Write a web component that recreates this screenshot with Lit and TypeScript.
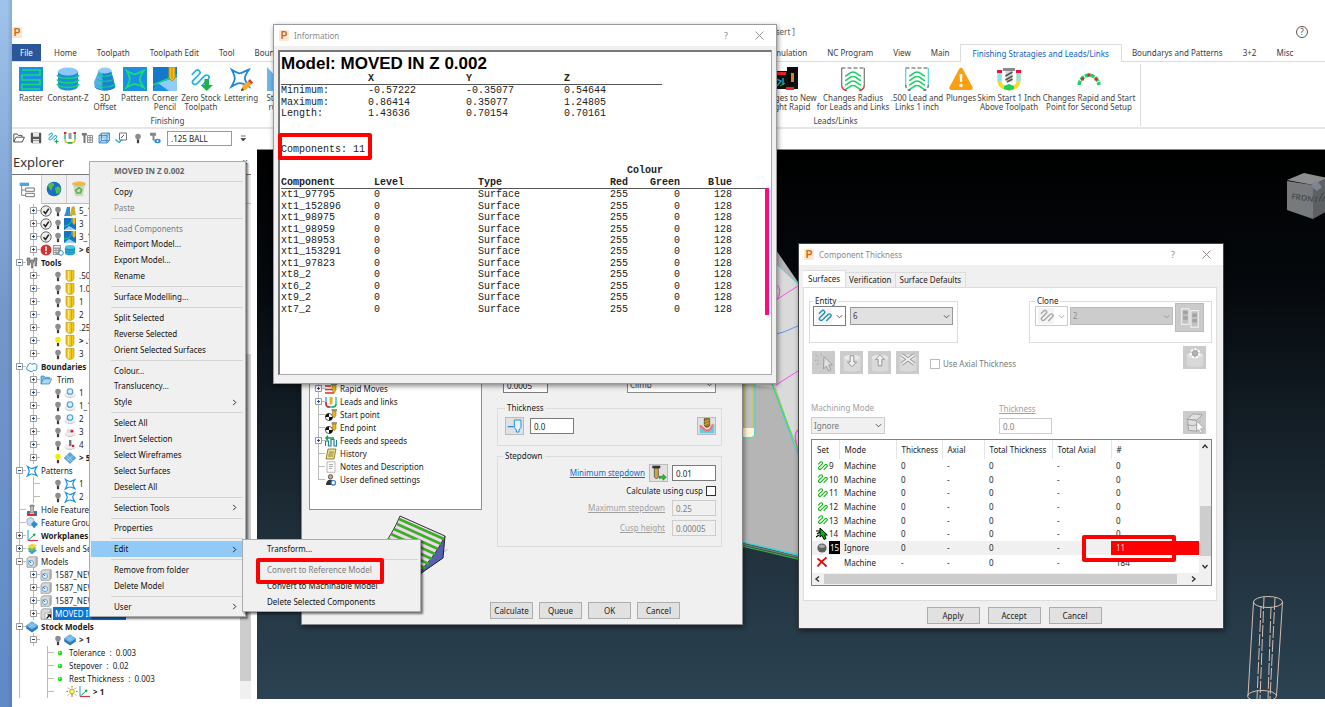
import { LitElement, html, svg, css, nothing } from "lit";
import { customElement } from "lit/decorators.js";
import { classMap } from "lit/directives/class-map.js";

const bulb = (c: string) => svg`<circle cx="6" cy="4.5" r="2.8" fill=${c}/><path d="M4.6 6h2.8v2H4.6z" fill=${c}/><path d="M4.9 8h2.2v3.2H4.9z" fill="#4a3838"/>`;
const cubeGlyph = svg`<path d="M1 2.5 3 .8h8.2v8.6L9.4 11.3H1z" fill="#d9d9d9" stroke="#8a8a8a" stroke-width=".7"/><path d="M9.4 2.7v8.6l1.8-1.9V.8z" fill="#a9a9a9"/>`;
const stamp = svg`<ellipse cx="6" cy="8" rx="5.4" ry="3" fill="#c9c9c9"/><ellipse cx="6" cy="7.2" rx="5.2" ry="2.6" fill="#eeeeee"/>`;
const star = "M1.5 1.5C4 3 5 3.5 6 3.5S8.5 2.5 11 1.5C9.5 4 8.8 5 8.8 6.2S9.5 8.5 11 10.8C8.5 9.5 7.5 9 6 9S3.5 9.8 1.3 11C2.7 8.5 3.2 7.5 3.2 6.2S2.5 3.5 1.5 1.5Z";
const serpent = "M-3.9 1.5V-1.5a1.3 1.3 0 0 1 2.6 0V3a1.3 1.3 0 0 0 2.6 0V-3a1.3 1.3 0 0 1 2.6 0V1.5";
const snake = (c: string) => svg`<path d=${serpent} transform="translate(6 6) rotate(45)" fill="none" stroke=${c} stroke-width="1.1"/>`;

/* Glyphs for the small tree, toolbar and list icons, on a 12 unit grid. */
const SMALL: Record<string, unknown> = {
  check: svg`<circle cx="6" cy="6" r="5.2" fill="#eee" stroke="#555" stroke-width=".9"/><path d="m3.5 6.2 2 2.3L8.8 3.6" fill="none" stroke="#222" stroke-width="1.6"/>`,
  bulb: bulb("#8d8d8d"),
  bulbOn: bulb("#f2e90e"),
  alert: svg`<circle cx="6" cy="6" r="5.5" fill="#d8302f"/><path d="M6 2.5v4.5" stroke="#fff" stroke-width="1.6"/><circle cx="6" cy="9" r="1" fill="#fff"/>`,
  calc: svg`<path d="M1 1h8v10H1z" fill="#9b9b9b"/><path d="M2 2h6v1.6H2zM2 5h1.5v1H2zM4.5 5H6v1H4.5zM2 7h1.5v1H2zM4.5 7H6v1H4.5zM2 9h1.5v1H2z" fill="#eee"/><circle cx="9" cy="9" r="2.3" fill="#fff" stroke="#2a8bd8"/>`,
  steep: svg`<path d="M0 11C2 8 2 4 3 2h3v9z" fill="#2f8fd6"/><path d="m6 11 2-9 1.5.5-1.5 8.5zM9 10l1-9 1.5 9z" fill="#e3b320" stroke="#9a7a10" stroke-width=".4"/>`,
  corner: svg`<path d="M0 0h12v12H0z" fill="#1673c4"/><path d="m0 12 5-4 7 4z" fill="#9ed3f7"/><path d="M0 8c5-.5 8-3 8-8" stroke="#14dc78" fill="none"/><path d="M8.5 0h3v5L10 7 8.5 5z" fill="#e8b818"/>`,
  disc: svg`<ellipse cx="6" cy="3" rx="5" ry="2" fill="#4fc3e6"/><path d="M1 3v6c0 3 10 3 10 0V3c0 2.5-10 2.5-10 0" fill="#1e8fd1"/><path d="M1 5.5c0 2.500 10 2.500 10 0M1 8c0 2.500 10 2.500 10 0" fill="none" stroke="#18cf86"/>`,
  tools: svg`<path d="M1 1h3v3H3.5v4h-2V4H1zM4.5 3h3v3H7v5H5.5V6h-1zM8 1h3v3h-.5v5H9V4H8z" fill="#999" stroke="#555" stroke-width=".6"/>`,
  tool: svg`<path d="M2 .5h8V8c0 4.500-8 4.500-8 0z" fill="#f3c716" stroke="#b08d10" stroke-width=".6"/><path d="M4.600 1v9.500" stroke="#fbe88a" stroke-width="1.3"/><path d="M7.500 1v9.800" stroke="#cf9f0a" stroke-width=".8"/>`,
  cloud: svg`<path d="M3 9.500C.2 9.500 0 6 2 5.300 1.500 2.500 5 1.500 6 3.400 8.500 1.500 12 3.500 10.800 6.300 11.500 9 9 10.500 7.800 9 6.500 11 4 11 3 9.500Z" fill="none" stroke="#1a8fdf"/>`,
  folder: svg`<path d="M1 10V2h3l1 1.300h4.500V5" fill="#7cc0ec" stroke="#2d7fb8" stroke-width=".7"/><path d="m1 10 2.200-5.200H11.600L9.300 10z" fill="#a7d8f6" stroke="#2d7fb8" stroke-width=".7"/>`,
  ring: svg`${stamp}<circle cx="6" cy="4.500" r="2.800" fill="#dceefa" stroke="#4a9bd6" stroke-width="1.1"/>`,
  dotRed: svg`${stamp}<path d="M3 3h5v4H3z" fill="#dcdcdc"/><circle cx="8" cy="5.200" r="1.400" fill="#e0104c"/>`,
  dotRod: svg`${stamp}<path d="M5 1h2.400v6H5z" fill="#777"/><circle cx="9" cy="7" r="1.300" fill="#e0104c"/>`,
  layers: svg`<path d="M6 .5 11.800 6 6 11.500.2 6z" fill="#5fa9dc" stroke="#2f79b5" stroke-width=".6"/><path d="M3 3.500 8.800 9M1.600 4.800 7.400 10.300M9 3.500 3.200 9" stroke="#bfe2f7" stroke-width=".7"/>`,
  star: svg`<path d=${star} fill="none" stroke="#1a8fdf" stroke-width="1.200"/>`,
  hole: svg`<path d="M1 7h3v3h4V7h3v5H1z" fill="#3977b8"/><path d="M4.500 1h3v8h-3z" fill="#bcbcbc" stroke="#666" stroke-width=".6"/><path d="M3.500 1h5v1.600h-5z" fill="#888"/><path d="M2 10.500h8" stroke="#d22" stroke-width="1.200"/>`,
  feature: svg`<path d="m1 2 4-1.500 3 2v5L4 9 1 7z" fill="#c9dff0" stroke="#7f95a8" stroke-width=".6"/><path d="m5 7 3-3 4 3-4 4.500z" fill="#2f8bd0"/>`,
  axes: svg`<path d="M2 0v10.500" stroke="#1a9fe8" stroke-width="1"/><path d="M2 10.500h10" stroke="#e0304a" stroke-width="1.200"/><path d="m2.500 10 6-5.500" stroke="#12a64a" stroke-width="1"/><path d="m6.500 4 3-.5-.5 3z" fill="#12a64a"/>`,
  levels: svg`<path d="m2 8 5-3 4 2.500-5 3.800z" fill="#3f9be0"/><path d="m1 6 5-3 4.500 2L6 8.500z" fill="#60c06a"/><path d="m1.500 3 5-2.500L11 2.500 6 6z" fill="#f4d53c"/>`,
  model: svg`${cubeGlyph}<circle cx="5" cy="7" r="2.600" fill="#dff0fb" stroke="#5a9ac8" stroke-width=".8"/><path d="m5 7-2-2.300" stroke="#1f6ea6"/>`,
  modelRef: svg`${cubeGlyph}<path d="M5 5h6.500v6.500H5z" fill="#fff" stroke="#888" stroke-width=".6"/><path d="m6.500 10.500 3-3M7.500 6.800h3v3" fill="none" stroke="#111" stroke-width="1.200"/>`,
  stock: svg`<path d="M6 .5 11.800 4.500v3L6 11.500.2 7.500v-3z" fill="#2c79b8"/><path d="M6 .5 11.800 4.500 6 8.500.2 4.500z" fill="#6cb6e8"/><path d="m3 2.500 6 4M9 2.500l-6 4" stroke="#a8d8f5" stroke-width=".6"/>`,
  dot: svg`<circle cx="6" cy="6" r="2.300" fill="#1fdc1f"/><circle cx="5.500" cy="5.400" r=".8" fill="#b9ffb0"/>`,
  sun: svg`<circle cx="6" cy="5.500" r="2.400" fill="#fff36a" stroke="#b08b10" stroke-width=".8"/><path d="M6 8v3M6 0v1.500M.5 5.500H2M10 5.500h1.500M2 1.700l1 1M10 1.700l-1 1M2 9.300l1-1M10 9.300l-1-1" stroke="#8a6a10" stroke-width=".9"/>`,
  open: svg`<path d="M.8 10V2h3.500l1 1.400H9V5M.8 10 3 5.200h8.400L9.300 10z" fill="#fff" stroke="#444" stroke-width=".9"/>`,
  save: svg`<path d="M.8.8h10.400v10.400H2L.8 10z" fill="#555"/><path d="M3 .8h6v4H3zM3 7h6v4.200H3z" fill="#e8e8e8"/><path d="M3 8.500h6" stroke="#777" stroke-width=".7"/>`,
  stripes: svg`<path d=${serpent} transform="translate(5 5) rotate(45) scale(.9)" fill="none" stroke="#27a9c9" stroke-width="1.100"/><path d="M9.500 7.500v4M7.500 9.500h4" stroke="#1aa84a" stroke-width="1.200"/>`,
  links: svg`<path d="M1 1v7c0 4 10 4 10 0V1" fill="none" stroke="#e8b81c" stroke-width="1.500"/><path d="M0 1h2.500M9.500 1H12" stroke="#e02050" stroke-width="1.800"/><path d="M1 2.500V7M11 2.500V7" stroke="#36bfe0" stroke-width="1.500"/><path d="M4.500 1h3v6h-3z" fill="#999"/><path d="M3.800 10.800h4.400" stroke="#20b050" stroke-width="1.600"/>`,
  holder: svg`<path d="M.8 1h5v2.500H4.500V11h-2V3.500H.8z" fill="#777"/><path d="M6.500 3.500h5v7h-5zM6.500 5.700h5M6.500 8h5M9 3.500v7" fill="none" stroke="#777" stroke-width=".8"/>`,
  block: svg`<path d="M1 3.500 3.500 1h8v7.500L9 11H1zM1 3.500h8V11M9 3.500 11.500 1M3.500 1v7.500h8M3.500 8.500 1 11" fill="#a8d2f2" stroke="#2c7fc4" stroke-width=".8"/>`,
  pick: svg`<path d="M4.500 1h7v7h-7z" fill="#fff" stroke="#777"/><path d="m6 6 3-3" stroke="#555"/><path d="m.5 7.500 3.500 3 3.500-3" fill="none" stroke="#1fa5c9" stroke-width="1.200"/>`,
  toolEye: svg`<path d="M1 .8h6v3H5.500V8L4.500 9l-1-1V3.800H1z" fill="#888"/><ellipse cx="8.500" cy="9" rx="3.200" ry="2.200" fill="#2b8be0"/><circle cx="8.500" cy="9" r="1" fill="#fff"/>`,
  rapid: svg`<path d="M0 3h6M0 6.500h8M0 10h9" stroke="#e03020" stroke-width="1.500"/><path d="M7 2h4v5L9 10 7 7z" fill="#e5b41a" stroke="#8a6d10" stroke-width=".6"/><path d="M6 0h6v2H6z" fill="#888"/>`,
  leads: svg`<path d="M1 1v7c0 4 10 4 10 0V1" fill="none" stroke="#28b4dc" stroke-width="1.400"/><path d="M1 6v2c0 3.500 3 3.500 4 2.500" fill="none" stroke="#e02020" stroke-width="1.500"/><path d="M7 10.500c2 1 4 0 4-2.500" fill="none" stroke="#17b04a" stroke-width="1.500"/><path d="M4.500 1h3v6.500L6 9 4.500 7.500z" fill="#e5b41a"/>`,
  point: svg`<circle cx="4" cy="8" r="3.600" fill="#fff" stroke="#111" stroke-width=".7"/><path d="M4 4.400A3.600 3.600 0 0 0 .4 8H4zM4 11.600A3.600 3.600 0 0 0 7.600 8H4z" fill="#111"/><path d="M6.500 0H12v2.200H6.500z" fill="#999"/><path d="M7.500 2h3.500v4.500L9.200 9 7.500 6.500z" fill="#e5b41a" stroke="#8a6d10" stroke-width=".5"/>`,
  feeds: svg`<path d="M.5 11V6h3v5h2.500V4.500h3V11h2.500V5" fill="none" stroke="#1f7fa0" stroke-width="1.200"/><path d="M1 3h8M3 .8.800 3 3 5.200" fill="none" stroke="#159a3a" stroke-width="1.300"/>`,
  history: svg`<path d="M3 1h8L9 11H1z" fill="#efe08a" stroke="#7a6a20" stroke-width=".8"/><path d="M4 4h5M3.500 6h5M3 8h5" stroke="#7a6a20" stroke-width=".8"/>`,
  notes: svg`<path d="M2 .8h8v10.500H2z" fill="#fff" stroke="#aaa" stroke-width=".8"/><path d="M4 3.500h4M4 5.500h4M4 7.500h3" stroke="#888" stroke-width=".7"/><path d="M2 2v8" stroke="#ccc" stroke-dasharray="1"/>`,
  user: svg`<circle cx="5.500" cy="2.800" r="2.200" fill="#c9a98a" stroke="#333" stroke-width=".7"/><path d="M1 11c0-7 8-7 9 0z" fill="#333"/><circle cx="8.300" cy="8.800" r="2.300" fill="#fff" stroke="#2a7fd0" stroke-width="1.200"/>`,
  surf: snake("#10b410"),
  surfBlue: snake("#2b93b0"),
  surfGrey: snake("#a9a9a9"),
  cursor: svg`<path d="M4 0v9l2-1.600 2 4L10 10.500 8.500 7h2.800z" fill="#0b0" stroke="#000"/><path d="M0 3h4M1 6l3-2M0 9l3-2" stroke="#000" stroke-width="1.200"/>`,
  ball: svg`<circle cx="6" cy="6" r="4.600" fill="#5e5e5e"/><ellipse cx="6" cy="4.200" rx="3" ry="1.700" fill="#a8a8a8"/>`,
  cross: svg`<path d="M1.500 2.500C5 5 8 8 10.500 10.500M10.500 1.500C7 4 4 7 1.500 10.500" stroke="#dd1010" stroke-width="1.900" fill="none"/>`,
};

/* Ribbon glyphs, on a 24 unit grid. */
const waves = svg`<path d="M4 9c3 0 4-4 8-4s5 4 8 4M4 13.500c3 0 4-4 8-4s5 4 8 4M4 18c3 0 4-4 8-4s5 4 8 4M4 22.500c3 0 4-4 8-4s5 4 8 4" fill="none" stroke="#23cf6a" stroke-width="1.600"/>`;
const LARGE: Record<string, unknown> = {
  raster: svg`<path d="M0 0h24v24H0z" fill="#1a8fe3"/><path d="M3 3h18v5H3v5h18v4.500H3V22h18" fill="none" stroke="#13df72" stroke-width="1.700"/>`,
  constz: svg`<path d="M2 4v15c0 6 20 6 20 0V4z" fill="#1f8edb"/><ellipse cx="12" cy="4.500" rx="10" ry="4" fill="#8bc8f5"/><path d="M1 8c2 4.500 20 4.500 22 0M1 12.500c2 4.500 20 4.500 22 0M1 17c2 4.500 20 4.500 22 0" fill="none" stroke="#12d873" stroke-width="1.600"/>`,
  offset: svg`<path d="M6 3 1.500 20c4 5 17 5 21 0L18 3z" fill="#1b83d2"/><path d="m6 3-5 12 1 5 7 3V5z" fill="#56aeee"/><ellipse cx="12" cy="3.500" rx="6.500" ry="3" fill="#93cdf6"/><path d="M5 7c3 3 11 3 14 0M4 12c3 3 13 3 17 0M2 17c5 4 16 4 20 0M9 6v17" fill="none" stroke="#12c8a0" stroke-width="1.200"/>`,
  pattern: svg`<path d="M0 0h24v24H0z" fill="#1a8fe3"/><path d=${star} transform="translate(1 1) scale(1.800)" fill="none" stroke="#13df72" stroke-width="1"/>`,
  corner: svg`<path d="M0 0h24v24H0z" fill="#1478cc"/><path d="m0 24 5-8L24 10v14z" fill="#8fcdf8"/><path d="m5 16 11 8H0z" fill="#1a8fe3"/><path d="M0 18 24 8" stroke="#13df72" stroke-width="1.400"/><path d="M16 0h6v11l-3 3-3-3z" fill="#f2bd1d" stroke="#c98f0a"/><path d="M19 0v12" stroke="#c98f0a"/>`,
  zero: svg`<path d=${serpent} transform="translate(10 11) rotate(45) scale(1.900)" fill="none" stroke="#21b4d8" stroke-width=".9"/><path d="M15.500 12h4.500v6h4l-6.200 6-6.300-6h4z" fill="#1fb04c"/>`,
  lettering: svg`<path d=${star} transform="scale(1.800)" fill="none" stroke="#1a86dc" stroke-width="1"/><path d="m12 24 1.500-5 7-6 3 3.500-7 6.500z" fill="#f6a92c"/><path d="m19 14 2-2 3 3.500-1.500 1.500z" fill="#e23a3a"/><path d="m12 24 1-3 2 2z" fill="#333"/>`,
  steep: svg`<path d="M2 0v24h22z" fill="#6fb7ec"/>`,
  rapidred: svg`<path d="M0 4h24v18H0z" fill="#111"/><path d="M0 5h12v3H0zM12 20h8v3h-8z" fill="#f02020"/><path d="M13 0h11v4h-2v12l-4 3-4-3V4h-1z" fill="#0a0a0a"/><path d="M17 6h3v9h-3z" fill="#c98a2a"/><path d="m2 12 5 2-4 5M9 11v7" stroke="#29a8d8" stroke-width="1.400" fill="none"/><path d="m6 19 5-3" stroke="#2ac83a"/>`,
  radius: svg`${waves}<path d="M.5 1h23" stroke="#555" stroke-dasharray="4 2"/><path d="M.7 1v17M23.300 1v17" stroke="#777" stroke-width="1.200"/><path d="M.7 18c0 4 3 5.500 5 5.500M23.300 18c0 4-3 5.500-5 5.500" fill="none" stroke="#e62a2a" stroke-width="1.300"/>`,
  lead500: svg`${waves}<path d="M.5 1h23" stroke="#555" stroke-dasharray="4 2"/><path d="M.7 1v17M23.300 1v17" stroke="#4fd0e0" stroke-width="1.200"/><path d="M.7 18c0 4 3 5.500 5 5.500M23.300 18c0 4-3 5.500-5 5.500" fill="none" stroke="#666" stroke-width="1.300" stroke-dasharray="3 2"/>`,
  warn: svg`<path d="M10.300 1.800c.8-1.300 2.600-1.300 3.400 0L23.500 20c.7 1.500-.2 3-1.800 3H2.300c-1.600 0-2.500-1.500-1.800-3z" fill="#fb9f12"/><path d="M10.600 7h2.800l-.4 8h-2z" fill="#fff"/><circle cx="12" cy="18.500" r="1.700" fill="#fff"/>`,
  skim: svg`<path d="M2.500 6v8c0 10 19 10 19 0V6" fill="none" stroke="#f2dc27" stroke-width="4"/><path d="M2.500 5v9M21.500 5v9" stroke="#8ee2ee" stroke-width="4"/><path d="M0 3h5v3H0zM19 3h5v3h-5z" fill="#e8123c"/><path d="m7 19 5-2 5 2v3l-5 1.500L7 22z" fill="#1fd05e"/><path d="M6 1h12v3H6z" fill="#8b8b8b"/><path d="M8.500 4h7v11h-7z" fill="#d8d8d8"/><path d="m8.500 9 7-4M8.500 13l7-4M10 15l5.500-3" stroke="#555" stroke-width="1.500"/>`,
  arc: svg`<path d="M2 18C4 5 20 5 22 18" fill="none" stroke="#1fd268" stroke-width="3.600" stroke-dasharray="4.500 1"/><path d="M4 10.500h3v3H4zM10.500 6.500h3v3h-3zM17.500 10.500h3v3h-3z" fill="#f0202c"/>`,
  copies: svg`<path d="M3 2h8v17H3zM13 4h8v18h-8z" fill="#c2c2c2" stroke="#eee" stroke-width="1.200"/><path d="M4.500 4h5v4h-5zM4.500 10h5v4h-5zM14.500 7h5v4h-5zM14.500 13h5v4h-5z" fill="#a2a2a2"/>`,
  gear: svg`<path d="M3 9v10c0 4 18 4 18 0V9z" fill="#d8d8d8"/><ellipse cx="12" cy="9" rx="9" ry="3" fill="#e4e4e4"/><circle cx="12" cy="7" r="4.500" fill="none" stroke="#fff" stroke-width="2.500" stroke-dasharray="2.400 1.600"/><circle cx="12" cy="7" r="3" fill="#b5b5b5" stroke="#999"/>`,
  stack: svg`<path d="m3 8 7-6 10 1-6 6zM3 14l8 1 7-5M5 20l9 1V9L4 8z" fill="#dedede" stroke="#a2a2a2"/><path d="m14 10 8 8-4 .3 2 4-2 .7-2-4-2 2z" fill="#fff" stroke="#999" stroke-width=".7"/>`,
  select: svg`<path d="m12 5 9 9-4 .3 2.500 5-2.500 1.200-2.500-5-3 3z" fill="#e2e2e2" stroke="#8e8e8e" stroke-width=".9"/><path d="m3 3 3 3M9 2v3M2 9h4M4 14l3-2" stroke="#9c9c9c" stroke-dasharray="1.500 1"/>`,
  take: svg`<path d="M3 6v13c0 3 18 3 18 0V6z" fill="#d9d9d9"/><ellipse cx="12" cy="6" rx="9" ry="3" fill="#e8e8e8"/><path d="M10 4h4v7h3l-5 5-5-5h3z" fill="#f2f2f2" stroke="#8e8e8e"/>`,
  give: svg`<path d="M3 6v13c0 3 18 3 18 0V6z" fill="#d9d9d9"/><ellipse cx="12" cy="6" rx="9" ry="3" fill="#e8e8e8"/><path d="M10 15h4V8h3l-5-5-5 5h3z" fill="#f2f2f2" stroke="#8e8e8e"/>`,
  clear: svg`<path d="M3 6v13c0 3 18 3 18 0V6z" fill="#d9d9d9"/><ellipse cx="12" cy="6" rx="9" ry="3" fill="#e8e8e8"/><path d="m5 3 14 10M19 3 5 13" stroke="#9a9a9a" stroke-width="4"/><path d="m5 3 14 10M19 3 5 13" stroke="#eee" stroke-width="2"/>`,
  tree: svg`<path d="M1 1h14v5H1z" fill="#4fa3e0"/><path d="M4 6v14h6M4 12h6" fill="none" stroke="#888" stroke-width="1.500"/><path d="M10 9h13v5H10zM10 17h13v5H10z" fill="#fff" stroke="#777" stroke-width="1.500"/>`,
  globe: svg`<circle cx="12" cy="12" r="11" fill="#1670c0"/><path d="M4 5c4-4 9-2 8 1s-3 3-3 6-3 2-4-1-3-3-1-6zM15 9c4-2 7 0 7 4s-4 7-6 6-1-4-2-6 0-3 1-4z" fill="#58b947"/>`,
  bin: svg`<path d="M3 4h18l-3 19H6z" fill="#d9d4c4"/><ellipse cx="12" cy="4.500" rx="10" ry="3.500" fill="#f0b93c" stroke="#c9c9c9"/><path d="m12 10 4 3-2 5h-5l-2-4z" fill="none" stroke="#3cc045" stroke-width="2.400"/>`,
  thick: svg`<path d="M1 13h9" stroke="#2a8fd8" stroke-width="2"/><path d="M11 3h10v11l-3 4v3h-4v-3l-3-4z" fill="#e6f3fc" stroke="#2a8fd8" stroke-width="1.500"/>`,
  pocket: svg`<path d="M1 13v10h22V9c-3 0-4 5-6 7-3 2-8 2-10-1-2-2-4-2-6-2z" fill="#62cde6"/><path d="M1 12c6 0 4 7 11 7s6-6 9-9" fill="none" stroke="#f0787f" stroke-width="3.500"/><path d="M8 1h8v9c0 5-8 5-8 0z" fill="#a87a1c" stroke="#3a2c08"/><path d="m8 6 8-3M8 10l8-3" stroke="#e8c050"/>`,
  step: svg`<path d="M2 1h12v4H2z" fill="#333"/><path d="M5 5h6v13l-3 3-3-3z" fill="#d6a536" stroke="#333"/><path d="M12 17h6v-3l5 4.500-5 4.500v-3h-6z" fill="#27c02f" stroke="#0c6c14" stroke-width=".7"/>`,
};

const sm = (n: string) => html`<svg class="sm" viewBox="0 0 12 12" aria-hidden="true">${SMALL[n]}</svg>`;
const lg = (n: string, cls = "lg") => html`<svg class=${cls} viewBox="0 0 24 24" aria-hidden="true">${LARGE[n]}</svg>`;
const chevron = html`<svg class="chev" viewBox="0 0 8 8" aria-hidden="true"><path d="m1 2.500 3 3 3-3" fill="none" stroke="currentColor"/></svg>`;

type Row = { lvl: number; exp?: "+" | "-" | "·"; icons: string[]; text: string; bold?: boolean; sel?: boolean };
const r = (lvl: number, exp: Row["exp"], icons: string, text: string, o: Partial<Row> = {}): Row =>
  ({ lvl, exp, icons: icons.split(" "), text, ...o });

const TREE: Row[] = [
  r(1, "+", "check bulb steep", "5_1"), r(1, "+", "check bulb corner", "3"), r(1, "+", "check bulb corner", "3_1"),
  r(1, "+", "alert calc disc", "> 6", { bold: true }),
  r(0, "-", "tools", "Tools", { bold: true }),
  r(1, "+", "_ bulb tool", ".500 BALL"), r(1, "+", "_ bulb tool", "1.0 BALL"), r(1, "+", "_ bulb tool", "1"),
  r(1, "+", "_ bulb tool", "2"), r(1, "+", "_ bulb tool", ".250 BALL"), r(1, "+", "_ bulbOn tool", "> .125", { bold: true }),
  r(1, "+", "_ bulb tool", "3"),
  r(0, "-", "cloud", "Boundaries", { bold: true }),
  r(1, "+", "folder", " Trim"),
  r(1, "+", "_ bulb ring", "1"), r(1, "+", "_ bulb ring", "1_1"), r(1, "+", "_ bulb ring", "2"),
  r(1, "+", "_ bulb dotRed", "3"), r(1, "+", "_ bulb dotRod", "4"), r(1, "+", "_ bulbOn layers", "> 5", { bold: true }),
  r(0, "-", "star", "Patterns"),
  r(1, "·", "_ bulb star", "1"), r(1, "·", "_ bulb star", "2"),
  r(0, "·", "hole", "Hole Feature Sets"), r(0, "·", "feature", "Feature Groups"),
  r(0, "+", "axes", "Workplanes", { bold: true }), r(0, "+", "levels", "Levels and Sets"),
  r(0, "-", "model", "Models"),
  r(1, "+", "model", "1587_NEW"), r(1, "+", "model", "1587_NEW"), r(1, "+", "model", "1587_NEW"),
  r(1, "+", "modelRef", "MOVED IN Z 0.002", { sel: true }),
  r(0, "-", "stock", "Stock Models", { bold: true }),
  r(1, "-", "_ bulb stock", "> 1", { bold: true }),
  r(2, "·", "dot", "Tolerance  :  0.003"), r(2, "·", "dot", "Stepover  :  0.02"), r(2, "·", "dot", "Rest Thickness  :  0.003"),
  r(2, "·", "_ sun axes", "> 1", { bold: true }),
];

const SETTINGS: Row[] = [
  r(0, "+", "rapid", "Rapid Moves"), r(0, "+", "leads", "Leads and links"), r(0, "·", "point", "Start point"),
  r(0, "·", "point", "End point"), r(0, "+", "feeds", "Feeds and speeds"), r(0, "·", "history", "History"),
  r(0, "·", "notes", "Notes and Description"), r(0, "·", "user", "User defined settings"),
];

type Cmd = { icon: string; label: string; w: number };
const FINISHING: Cmd[] = [
  { icon: "raster", label: "Raster", w: 32 }, { icon: "constz", label: "Constant-Z", w: 42 },
  { icon: "offset", label: "3D\nOffset", w: 32 }, { icon: "pattern", label: "Pattern", w: 28 },
  { icon: "corner", label: "Corner\nPencil", w: 32 }, { icon: "zero", label: "Zero Stock\nToolpath", w: 40 },
  { icon: "lettering", label: "Lettering", w: 40 }, { icon: "steep", label: "Steep\nruns", w: 32 },
];
const LEADS: Cmd[] = [
  { icon: "rapidred", label: "Changes to New\nHeight Rapid", w: 60 }, { icon: "radius", label: "Changes Radius\nfor Leads and Links", w: 74 },
  { icon: "lead500", label: ".500 Lead and\nLinks 1 inch", w: 54 }, { icon: "warn", label: "Plunges", w: 34 },
  { icon: "skim", label: "Skim Start 1 Inch\nAbove Toolpath", w: 62 }, { icon: "arc", label: "Changes Rapid and Start\nPoint for Second Setup", w: 98 },
];

const MENU: (string | null)[] = [
  "!MOVED IN Z 0.002", null, "Copy", "-Paste", null, "-Load Components", "Reimport Model...", "Export Model...", "Rename", null,
  "Surface Modelling...", null, "Split Selected", "Reverse Selected", "Orient Selected Surfaces", null, "Colour...", "Translucency...",
  ">Style", null, "Select All", "Invert Selection", "Select Wireframes", "Select Surfaces", "Deselect All", null, ">Selection Tools",
  null, "Properties", null, "*Edit", null, "Remove from folder", "Delete Model", null, ">User",
];
const SUBMENU = ["Transform...", null, "-Convert to Reference Model", "Convert to Machinable Model", "Delete Selected Components"];

const COMPONENTS = ["xt1_97795", "xt1_152896", "xt1_98975", "xt1_98959", "xt1_98953", "xt1_153291", "xt1_97823", "xt8_2", "xt6_2", "xt9_2", "xt7_2"];
const SETS: [string, string, string, string, string][] = [
  ["surf", "9", "Machine", "0", "0"], ["surf", "10", "Machine", "0", "0"], ["surf", "11", "Machine", "0", "0"],
  ["surf", "12", "Machine", "0", "0"], ["surf", "13", "Machine", "0", "0"], ["cursor", "14", "Machine", "0", "0"],
  ["ball", "15", "Ignore", "0", "11"], ["cross", "", "Machine", "-", "184"],
];

@customElement("app-root")
export class AppRoot extends LitElement {
  static styles = css`
    :host { display: block; font: 8px/10px "Noto Sans", sans-serif; color: #1c1c1c; --line: #dcdcdc; }
    * { box-sizing: border-box; }
    button, input, select { font: inherit; color: inherit; margin: 0; padding: 0; border-radius: 0; }
    button { cursor: default; }
    a { color: #0a6fd0; }
    .desk { position: relative; display: flex; min-height: 100vh; overflow: hidden; background: #fff; }
    .edge { flex: 0 0 12px; background: linear-gradient(90deg, #0000 60%, #2a4a8033), linear-gradient(#9fc3ea, #7396c9 45%, #5f8ac6); }
    .app { flex: 1; min-width: 0; display: flex; flex-direction: column; padding: 20px 0 8px; }
    .sm { width: 12px; height: 12px; flex: none; display: block; }
    .lg { width: 24px; height: 24px; flex: none; display: block; }
    .md { width: 16px; height: 16px; flex: none; display: block; }
    .logo { width: 10px; height: 11px; flex: none; background: #fde6cf; color: #c96a1c; font: bold 10px/11px "Liberation Sans", sans-serif; text-align: center; }

    .title { display: flex; align-items: center; height: 24px; }
    .title .doc { width: 773px; text-align: right; color: #555; }
    .help { margin-left: auto; margin-right: 17px; width: 12px; height: 12px; border: 1px solid #555; border-radius: 50%; background: none; color: #444; line-height: 10px; }
    .tabs { display: flex; height: 18px; border-bottom: 1px solid var(--line); }
    .tabs > div { display: flex; }
    .tabs .left { flex: 0 0 745px; }
    .tabs button { border: 0; background: none; padding: 0 10px; white-space: nowrap; color: #3b3b3b; }
    .tabs .file { background: #2b579a; color: #fff; width: 29px; padding: 0; margin-right: 3px; }
    .tabs .on { border: 1px solid var(--line); border-bottom: 0; background: #fff; color: #0a62c4; padding: 0 12px; height: 18px; }
    .ribbon { display: flex; height: 67px; padding: 5px 0 1px; border-bottom: 2px solid #e6e6e6; color: #444; }
    .group { display: flex; flex-direction: column; }
    .group.g1 { flex: 0 0 311px; }
    .group.g2 { flex: 0 0 610px; margin-left: 208px; border-right: 1px solid var(--line); margin-top: -3px; padding-top: 3px; }
    .cmds { display: flex; flex: 1; padding-left: 3px; }
    .g2 .cmds { justify-content: flex-end; padding: 0 2px 0 0; }
    .cmds button { display: flex; flex-direction: column; align-items: center; gap: 2px; border: 0; background: none; flex: none; line-height: 9px; white-space: pre; text-align: center; }
    .caption { text-align: center; line-height: 11px; }
    .quick { display: flex; align-items: center; height: 20px; gap: 5px; padding: 0 0 2px 1px; }
    .quick button { border: 0; background: none; width: 12px; height: 14px; display: grid; place-items: center; }
    .quick input { width: 65px; margin-left: 1px; }
    .quick input[type="text"] { height: 15px; border-color: #999; }
    .main { flex: 1; min-height: 0; display: flex; }

    .explorer { flex: 0 0 245px; display: flex; flex-direction: column; padding-right: 6px; }
    .ehead { display: flex; justify-content: space-between; align-items: center; height: 26px; padding: 0 3px 0 1px; border-bottom: 1px solid #777; font-size: 13px; line-height: 18px; color: #333; }
    .ehead button { border: 0; background: none; font-size: 10px; }
    .etabs { display: flex; height: 29px; background: #f0f0f0; border-bottom: 1px solid #bbb; }
    .etabs button { border: 0; border-right: 1px solid #ccc; background: none; width: 25px; display: grid; place-items: center; padding: 0; }
    .etabs .on { background: #fff; width: 30px; height: 29px; }
    .ebody { flex: 1 1 0; min-height: 0; display: flex; overflow: hidden; }
    .bar { flex: 0 0 11px; background: #f0f0f0; display: flex; flex-direction: column; align-items: center; padding: 150px 0 18px; }
    .bar i { flex: 1; width: 11px; background: #cdcdcd; }

    .tree { flex: 1; min-width: 0; margin: 0; padding: 0; list-style: none; }
    .row { position: relative; display: flex; align-items: center; height: 13px; white-space: pre; }
    .etree .row { background: linear-gradient(#bbb, #bbb) 7px 0 / 1px 13px no-repeat; padding-left: 3px; }
    .etree .l1 { background: linear-gradient(#bbb, #bbb) 7px 0 / 1px 13px no-repeat, linear-gradient(#bbb, #bbb) 21px 0 / 1px 13px no-repeat; padding-left: 17px; }
    .etree .l2 { background: linear-gradient(#bbb, #bbb) 7px 0 / 1px 13px no-repeat, linear-gradient(#bbb, #bbb) 35px 0 / 1px 13px no-repeat; padding-left: 31px; }
    .exp { width: 11px; height: 7px; flex: none; display: flex; align-items: center; padding-left: 1px; background: linear-gradient(#bbb, #bbb) 4px 3px / 7px 1px no-repeat; }
    .exp svg { width: 7px; height: 7px; background: #fff; }
    .txt { padding: 0 2px; margin-left: 1px; line-height: 13px; }
    .bold { font-weight: bold; }
    .sel { background: #0a74d6; color: #fff; }

    .view { flex: 1; min-width: 0; position: relative; overflow: hidden; border-top: 1px solid #888; background: linear-gradient(#000, #05090d 25%, #22333f 75%, #2b4252); }
    .view svg { position: absolute; inset: 0; width: 100%; height: 100%; }

    .win { position: absolute; display: flex; flex-direction: column; background: #f0f0f0; border: 1px solid #9a9a9a; box-shadow: 1px 2px 5px #0007; }
    .wbar { display: flex; align-items: center; gap: 5px; height: 21px; padding: 0 11px 0 5px; background: #fff; color: #8a8a8a; flex: none; }
    .wbar h2 { margin: 0 auto 0 0; font: inherit; }
    .wbar button { border: 0; background: none; width: 12px; margin-left: 16px; font-size: 9px; display: grid; place-items: center; }
    .wbar svg { width: 9px; height: 9px; }
    .btn { height: 17px; background: #e1e1e1; border: 1px solid #adadad; text-align: center; }
    input[type="text"] { border: 1px solid #7a7a7a; background: #fff; padding-left: 3px; height: 16px; min-width: 0; }
    input[type="text"]:disabled { border-color: #ccc; background: #f0f0f0; color: #7d7d7d; }
    input[type="checkbox"] { appearance: none; width: 10px; height: 10px; border: 1px solid #333; background: #fff; }
    input[type="checkbox"]:disabled { border-color: #bbb; }
    fieldset { margin: 0; min-width: 0; border: 1px solid var(--line); }
    legend { padding: 0 2px; margin-left: 0; line-height: 10px; text-align: left; }
    .pull { display: grid; align-items: center; color: #444; }
    .pull > * { grid-area: 1 / 1; }
    .pull select { appearance: none; width: 100%; height: 100%; border: 1px solid #8a8a8a; background: #fff; padding-left: 2px; }
    .pull .chev { justify-self: end; margin-right: 3px; width: 7px; height: 7px; pointer-events: none; }
    .pull.grey select { background: #e1e1e1; border-color: #999; }
    .pull.off { color: #909090; }
    .pull.off select { background: #cccccc; border-color: #bbb; opacity: 1; }
    .pull.pale select { background: #f0f0f0; border-color: #ccc; opacity: 1; color: #777; }
    .iconpick { display: flex; align-items: center; justify-content: space-around; width: 33px; height: 20px; border: 1px solid #7a7a7a; background: #fff; color: #444; padding: 0 2px; gap: 3px; flex: none; }
    .iconpick .sm { width: 16px; height: 16px; background: #f4f4f4; }
    .iconpick .chev { width: 7px; height: 7px; }
    .iconpick:disabled { border-color: #ccc; color: #999; }

    .info { left: 273px; top: 24px; width: 504px; height: 360px; }
    .report { flex: 1; margin: 4px 4px 8px; padding: 3px 2px 0 1px; background: #fff; border: 1px solid #aaa; border-top: 2px solid #777; border-left: 2px solid #777; font: 10px/12px "Liberation Mono", monospace; color: #222; }
    .report h1 { margin: 0; font: bold 17px/18px "Liberation Sans", sans-serif; color: #000; }
    .report table { border-collapse: collapse; table-layout: fixed; }
    .report th { text-align: left; border-bottom: 1px solid #555; }
    .report td, .report th { padding: 0; line-height: 11px; white-space: nowrap; }
    .dims { width: 381px; height: 46px; }
    .report p { margin: 25px 0 0; }
    .parts { width: 485px; height: 150px; }
    .report .parts .over { border: 0; text-align: right; padding-right: 17px; }
    .report .num { text-align: right; }
    .partsbox { display: flex; margin-top: 9px; }
    .pink { flex: none; width: 4px; margin: 23px 0 0 -1px; background: #ff0a80; align-self: stretch; }

    .path { left: 301px; top: 352px; width: 442px; height: 273px; border-color: #888; }
    .pbody { flex: 1; display: flex; gap: 15px; padding: 8px 20px 0 7px; min-height: 0; }
    .pleft { flex: 0 0 173px; }
    .ptree { border: 1px solid #8b8f96; background: #fff; height: 149px; padding: 20px 0 0 4px; }
    .ptree .row { background: linear-gradient(#bbb, #bbb) 4px 0 / 1px 13px no-repeat; }
    .ptree .row:last-child { background-size: 1px 7px; }
    .pic { display: block; width: 78px; height: 64px; margin: 4px 0 0 68px; }
    .pright { flex: 1; min-width: 0; display: flex; flex-direction: column; }
    .prow { display: flex; justify-content: space-between; padding: 15px 6px 0 6px; height: 34px; margin-bottom: 8px; }
    .prow input { width: 45px; margin-top: 1px; }
    .prow .pull { width: 89px; height: 17px; }
    .thick { display: flex; gap: 6px; padding: 4px 5px 8px 7px; margin-bottom: 5px; height: 43px; align-items: center; }
    .thick input { width: 44px; }
    .thick .last { margin-left: auto; }
    .ico { width: 19px; height: 18px; border: 1px solid #bbb; background: #e1e1e1; display: grid; place-items: center; flex: none; }
    .steps { padding: 3px 5px 10px 5px; display: grid; grid-template-columns: 1fr auto 44px; gap: 4px 4px; align-items: center; text-align: right; }
    .steps .wide { grid-column: 1 / -1; display: flex; justify-content: flex-end; align-items: center; gap: 3px; height: 10px; }
    .steps .two { grid-column: 1 / 3; color: #a0a0a0; text-decoration: underline; padding-right: 3px; }
    .pfoot { display: flex; gap: 6px; padding: 0 0 5px 188px; }
    .pfoot .btn { width: 43px; }

    .comp { left: 798px; top: 243px; width: 426px; height: 386px; border-color: #444; }
    .ctabs { display: flex; align-items: flex-end; padding: 5px 0 0 4px; height: 22px; }
    .ctabs button { height: 15px; background: #f0f0f0; border: 1px solid var(--line); border-bottom: 0; border-left: 0; padding: 0 4px 0 3px; }
    .ctabs .on { height: 17px; background: #fff; padding: 0 5px; }
    .panel { flex: 1; margin: 0 6px 0 4px; padding: 8px 4px 0 5px; background: #fff; border: 1px solid var(--line); display: flex; flex-direction: column; }
    .top { display: flex; justify-content: space-between; align-items: flex-start; }
    .top fieldset { display: flex; gap: 4px; height: 47px; padding: 0 3px; }
    .top .entity { width: 149px; }
    .top .clone { width: 183px; padding-left: 5px; gap: 2px; }
    .top .pull { width: 103px; height: 18px; margin-top: 1px; }
    .sq { width: 23px; height: 23px; border: 0; background: #cbcbcb; display: grid; place-items: center; flex: none; }
    .sq .lg { width: 22px; height: 22px; }
    .sq.big { width: 29px; height: 29px; border: 1px solid #bbb; margin-top: -3px; }
    .tools { display: flex; gap: 5px; padding: 3px 6px 0 3px; align-items: flex-end; }
    .tools label { display: flex; align-items: center; gap: 3px; color: #7a7a7a; margin: 0 auto 5px 6px; }
    .tools .sq.up { margin-bottom: 5px; }
    .mode { display: flex; align-items: flex-end; padding: 29px 6px 0 2px; color: #a0a0a0; }
    .mode > label { display: flex; flex-direction: column; gap: 4px; }
    .mode .pull { width: 74px; height: 17px; }
    .mode .t { margin-left: 114px; }
    .mode .t span { text-decoration: underline; }
    .mode input[type="text"] { width: 53px; background: #fff; }
    .mode .sq { margin-left: auto; }
    .grid { display: grid; grid-template-columns: 1fr 12px; margin: 5px 0 0 2px; border: 1px solid #7d828c; }
    .grid table { border-collapse: collapse; table-layout: fixed; width: 100%; height: 129px; margin-bottom: 4px; }
    .grid td, .grid th { padding: 0 0 0 5px; text-align: left; font-weight: normal; line-height: 11px; white-space: nowrap; }
    .grid th { border-right: 1px solid #e5e5e5; height: 19px; }
    .grid th:last-child { border: 0; }
    .grid td:first-child { padding-left: 4px; }
    .set { display: flex; align-items: center; gap: 1px; }
    .grid .hl { background: #f0f0f0; }
    .hl .set span { background: #000; color: #fff; padding: 1px; }
    .grid td.red { background: #f00; color: #d9d9d9; }
    .vs { background: #f0f0f0; display: flex; flex-direction: column; align-items: center; justify-content: space-between; color: #333; }
    .vs i { width: 11px; height: 50px; background: #cdcdcd; margin-top: 49px; }
    .hs { background: #f0f0f0; display: flex; align-items: center; height: 12px; grid-column: 1 / -1; padding-right: 12px; }
    .hs i { flex: 1; height: 10px; background: #cdcdcd; margin-right: 10px; }
    .arr { width: 10px; height: 8px; display: block; padding: 0 1px; margin: 3px 1px; }
    .cfoot { display: flex; justify-content: center; gap: 8px; padding: 6px 0 4px 6px; }
    .cfoot .btn { width: 53px; }

    .menu { position: absolute; display: flex; flex-direction: column; background: #f0f0f0; border: 1px solid #aaa; box-shadow: 2px 2px 2px #0008; padding: 1px; color: #111; }
    .menu button { flex: 1; min-height: 0; display: flex; justify-content: space-between; align-items: center; border: 0; background: none; padding: 0 6px 0 23px; text-align: left; }
    .menu hr { flex: none; width: auto; height: 1px; border: 0; background: #d4d4d4; margin: 2px 1px 2px 20px; align-self: stretch; }
    .menu .off { color: #7d7d7d; }
    .menu .head { color: #666; font-weight: bold; }
    .menu .hot { background: #91c9f7; }
    .menu .chev { width: 7px; height: 7px; transform: rotate(-90deg); }
    .m1 { left: 89px; top: 161px; width: 157px; height: 456px; }
    .m2 { left: 242px; top: 539px; width: 179px; height: 73px; }
    .mark { position: absolute; border: 4px solid #f00; border-radius: 2px; pointer-events: none; }
    .k1 { left: 278px; top: 133px; width: 94px; height: 27px; }
    .k2 { left: 256px; top: 558px; width: 128px; height: 26px; }
    .k3 { left: 1082px; top: 535px; width: 94px; height: 27px; }
  `;

  private row(x: Row) {
    const plus = x.exp === "+";
    return html`<li class="row l${x.lvl}"><span class="exp">${x.exp === "·" ? nothing : html`<svg viewBox="0 0 7 7" aria-hidden="true"><path d="M.5.5h6v6h-6z" fill="#fff" stroke="#999"/><path d=${plus ? "M2 3.500h3M3.500 2v3" : "M2 3.500h3"} stroke="#2a4a90"/></svg>`}</span>${x.icons.map((i) => sm(i))}<span class=${classMap({ txt: true, bold: !!x.bold, sel: !!x.sel })}>${x.text}</span></li>`;
  }

  private cmd(c: Cmd) {
    return html`<button style="width:${c.w}px">${lg(c.icon)}<span>${c.label}</span></button>`;
  }

  private item(m: string | null) {
    if (m === null) return html`<hr />`;
    const k = "!->*".includes(m[0]) ? m[0] : "";
    return html`<button class=${classMap({ head: k === "!", off: k === "-", hot: k === "*" })}><span>${k ? m.slice(1) : m}</span>${k === ">" || k === "*" ? chevron : nothing}</button>`;
  }

  private bar(title: string) {
    return html`<header class="wbar"><span class="logo">P</span><h2>${title}</h2><button>?</button>
      <button aria-label="Close"><svg viewBox="0 0 9 9"><path d="m.5.5 8 8m0-8-8 8" stroke="#888" stroke-width=".9"/></svg></button></header>`;
  }

  private arrow(d: string) {
    return html`<svg class="arr" viewBox="0 0 8 8" aria-hidden="true"><path d=${d} fill="none" stroke="#333" stroke-width="1.400"/></svg>`;
  }

  private scene() {
    return html`<svg viewBox="257 150 1068 549" preserveAspectRatio="xMinYMin slice" role="img" aria-label="Machined part">
      <path d="M700 250H776L798 282V556L742 542 700 532z" fill="#b5b5b5"/>
      <path d="M774 262 798 284V454L776 388 742 384V300z" fill="#dadada"/>
      <path d="m774 262 24 22" stroke="#40e0e8"/>
      <path d="M776 285c6 2 4 12 0 15M776 385l22-14M776 300l22-14" stroke="#ff50f0" fill="none"/>
      <path d="M776 334c10-2 16-6 22-8" stroke="#5a90ff" fill="none"/><path d="M798 430c-5 4-2 10 0 22" stroke="#ff50f0" stroke-width="1.500" fill="none"/>
      <path d="M772 384 798 455" stroke="#2bd0d8"/><path d="m773 386 25 64" stroke="#58e020"/>
      <path d="M744 384V436c3 3 7 3 9 0V384" fill="#c0c0c0" stroke="#e0c030"/><path d="M743 428h11v9h-11z" fill="#fff6d8"/><path d="M755 384v50c-2 5-10 5-13 3" fill="none" stroke="#2de0e0"/>
      <path d="m742 542 56 13" stroke="#28d8e0" stroke-width="1.300"/><path d="m742 546 56 13" stroke="#30b040" stroke-width="1.300"/><path d="m742 544 56 13" stroke="#777" stroke-width="1.500"/>
      <path d="m1287 181 26 4v34l-26-9z" fill="#777a7c"/><path d="m1313 185 14-7v33l-14 8z" fill="#5d6062"/><path d="m1287 180 17-7 23 5-14 7z" fill="#8b8d8f"/>
      <text x="1291" y="199" font-size="8" font-weight="bold" font-family="Noto Sans, sans-serif" fill="#4d5154" transform="rotate(8 1291 199)">FRONT</text>
      <path d="m1319 201 4-8M1322 201l4-6" stroke="#3c4042"/>
      <path d="m1312 183 6-1 4 5-5 4-4-3z" fill="#7f8396"/>
      <g fill="none" stroke="#d3bdb3" stroke-width="1"><ellipse cx="1268" cy="602" rx="14.500" ry="5.500"/><ellipse cx="1262" cy="696" rx="14.500" ry="5.500"/>
      <path d="m1253.500 602-5.500 94M1282.500 602l-6 94"/><path d="m1261 606-4 93M1264 597l-4 102M1271 607l-3 92M1275 598l-5 101" stroke-dasharray="12 2"/></g>
    </svg>`;
  }

  private info() {
    return html`<section class="win info">${this.bar("Information")}<div class="report">
      <h1>Model: MOVED IN Z 0.002</h1>
      <table class="dims"><colgroup><col style="width:87px"/><col style="width:98px"/><col style="width:98px"/><col/></colgroup>
        <tr><th></th><th>X</th><th>Y</th><th>Z</th></tr>
        <tr><td>Minimum:</td><td>-0.57222</td><td>-0.35077</td><td>0.54644</td></tr>
        <tr><td>Maximum:</td><td>0.86414</td><td>0.35077</td><td>1.24805</td></tr>
        <tr><td>Length:</td><td>1.43636</td><td>0.70154</td><td>0.70161</td></tr></table>
      <p>Components: 11</p>
      <div class="partsbox"><table class="parts"><colgroup><col style="width:93px"/><col style="width:104px"/><col style="width:110px"/><col style="width:40px"/><col style="width:52px"/><col style="width:52px"/><col/></colgroup>
        <tr><th class="over" colspan="3"></th><th class="over" colspan="2">Colour</th><th class="over" colspan="2"></th></tr>
        <tr><th>Component</th><th>Level</th><th>Type</th><th class="num">Red</th><th class="num">Green</th><th class="num">Blue</th><th></th></tr>
        ${COMPONENTS.map((c) => html`<tr><td>${c}</td><td>0</td><td>Surface</td><td class="num">255</td><td class="num">0</td><td class="num">128</td><td></td></tr>`)}
      </table><span class="pink"></span></div>
    </div></section>`;
  }

  private path() {
    return html`<section class="win path"><div class="pbody">
      <div class="pleft"><ul class="tree ptree">${SETTINGS.map((x) => this.row(x))}</ul>
        <svg class="pic" viewBox="0 0 78 64" aria-hidden="true"><path d="m20 62 52-28-3 3-40 27z" fill="#0003"/><path d="M68 22 66 44 43 60 42 50z" fill="#5560b0" stroke="#222"/><path d="M23 2 68 22C60 38 52 48 42 58L2 38C12 24 18 14 23 2z" fill="#f1d5f3" stroke="#333"/>
          <path d="m22 5 45 20M20 10l44 20M17 15l44 20M14 20l44 20M11 25l44 20M8 30l44 20M5 35l43 19" stroke="#35b31c" stroke-width="2.600"/></svg></div>
      <div class="pright">
        <div class="prow"><input type="text" aria-label="Tolerance" .value=${"0.0005"} /><span class="pull"><select aria-label="Cut direction"><option>Climb</option></select>${chevron}</span></div>
        <fieldset class="thick"><legend>Thickness</legend><button class="ico" aria-label="Axial thickness">${lg("thick", "md")}</button><input type="text" aria-label="Thickness" .value=${"0.0"} /><button class="ico last" aria-label="Component thickness">${lg("pocket", "md")}</button></fieldset>
        <fieldset class="steps"><legend>Stepdown</legend>
          <a href="#step">Minimum stepdown</a><button class="ico" aria-label="From tool">${lg("step", "md")}</button><input type="text" aria-label="Minimum stepdown" .value=${"0.01"} />
          <label class="wide">Calculate using cusp<input type="checkbox" /></label>
          <label class="two" for="mx">Maximum stepdown</label><input id="mx" type="text" disabled .value=${"0.25"} />
          <label class="two" for="ch">Cusp height</label><input id="ch" type="text" disabled .value=${"0.00005"} />
        </fieldset></div></div>
      <footer class="pfoot">${["Calculate", "Queue", "OK", "Cancel"].map((b) => html`<button class="btn">${b}</button>`)}</footer></section>`;
  }

  private comp() {
    return html`<section class="win comp">${this.bar("Component Thickness")}
      <nav class="ctabs"><button class="on">Surfaces</button><button>Verification</button><button>Surface Defaults</button></nav>
      <div class="panel">
        <div class="top">
          <fieldset class="entity"><legend>Entity</legend><button class="iconpick" aria-label="Entity type">${sm("surfBlue")}${chevron}</button><span class="pull grey"><select aria-label="Entity"><option>6</option></select>${chevron}</span></fieldset>
          <fieldset class="clone"><legend>Clone</legend><button class="iconpick" disabled aria-label="Clone type">${sm("surfGrey")}${chevron}</button><span class="pull off"><select disabled aria-label="Clone"><option>2</option></select>${chevron}</span><button class="sq big" aria-label="Copy set">${lg("copies")}</button></fieldset>
        </div>
        <div class="tools">${["select", "take", "give", "clear"].map((i) => html`<button class="sq" aria-label=${i}>${lg(i)}</button>`)}
          <label><input type="checkbox" disabled />Use Axial Thickness</label><button class="sq up" aria-label="Options">${lg("gear")}</button></div>
        <div class="mode"><label>Machining Mode<span class="pull pale"><select disabled><option>Ignore</option></select>${chevron}</span></label>
          <label class="t"><span>Thickness</span><input type="text" disabled .value=${"0.0"} /></label><button class="sq" aria-label="Pick thickness">${lg("stack")}</button></div>
        <div class="grid"><table>
          <colgroup><col style="width:27px"/><col style="width:57px"/><col style="width:46px"/><col style="width:42px"/><col style="width:68px"/><col style="width:59px"/><col/></colgroup>
          <thead><tr>${["Set", "Mode", "Thickness", "Axial", "Total Thickness", "Total Axial", "#"].map((h) => html`<th>${h}</th>`)}</tr></thead>
          <tbody>${SETS.map(([i, n, m, t, c]) => html`<tr class=${classMap({ hl: n === "15" })}><td><div class="set">${sm(i)}<span>${n}</span></div></td><td>${m}</td><td>${t}</td><td>-</td><td>0</td><td>-</td><td class=${classMap({ red: n === "15" })}>${c}</td></tr>`)}</tbody></table>
          <div class="vs">${this.arrow("m1.500 5 2.500-3 2.500 3")}<i></i>${this.arrow("m1.500 3 2.500 3 2.500-3")}</div>
          <div class="hs">${this.arrow("M5 1.500 2 4l3 2.500")}<i></i>${this.arrow("m3 1.500 3 2.500-3 2.500")}</div></div>
      </div>
      <footer class="cfoot">${["Apply", "Accept", "Cancel"].map((b) => html`<button class="btn">${b}</button>`)}</footer></section>`;
  }

  render() {
    return html`<div class="desk"><div class="edge"></div>
      <main class="app">
        <header class="title"><span class="logo">P</span><span class="doc">[ Insert ]</span><button class="help" aria-label="Help">?</button></header>
        <nav class="tabs"><div class="left"><button class="file">File</button>${["Home", "Toolpath", "Toolpath Edit", "Tool", "Boundary"].map((t) => html`<button>${t}</button>`)}</div>
          <div>${["Simulation", "NC Program", "View", "Main"].map((t) => html`<button>${t}</button>`)}<button class="on">Finishing Stratagies and Leads/Links</button>${["Boundarys and Patterns", "3+2", "Misc"].map((t) => html`<button>${t}</button>`)}</div></nav>
        <div class="ribbon"><div class="group g1"><div class="cmds">${FINISHING.map((c) => this.cmd(c))}</div><div class="caption">Finishing</div></div>
          <div class="group g2"><div class="cmds">${LEADS.map((c) => this.cmd(c))}</div><div class="caption">Leads/Links</div></div></div>
        <div class="quick">${["open", "save", "stripes", "links", "holder", "block", "pick", "bulb", "toolEye"].map((i) => html`<button aria-label=${i}>${sm(i)}</button>`)}
          <input type="text" aria-label="Active tool" .value=${".125 BALL"} /><button aria-label="More"><svg class="sm" viewBox="0 0 12 12"><path d="M4 4h4.500M4 6.500h4.500L6.200 9z" stroke="#444" stroke-width=".8" fill="#444"/></svg></button></div>
        <div class="main">
          <aside class="explorer"><div class="ehead"><span>Explorer</span><button aria-label="Close">×</button></div>
            <div class="etabs"><button class="on" aria-label="Tree">${lg("tree", "md")}</button><button aria-label="Web">${lg("globe", "md")}</button><button aria-label="Recycle bin">${lg("bin", "md")}</button></div>
            <div class="ebody"><ul class="tree etree">${TREE.map((x) => this.row(x))}</ul><div class="bar"><i></i></div></div></aside>
          <div class="view">${this.scene()}</div>
        </div>
      </main>
      ${this.path()}${this.comp()}${this.info()}
      <div class="menu m1">${MENU.map((m) => this.item(m))}</div>
      <div class="menu m2">${SUBMENU.map((m) => this.item(m))}</div>
      <span class="mark k1"></span><span class="mark k2"></span><span class="mark k3"></span>
    </div>`;
  }
}
